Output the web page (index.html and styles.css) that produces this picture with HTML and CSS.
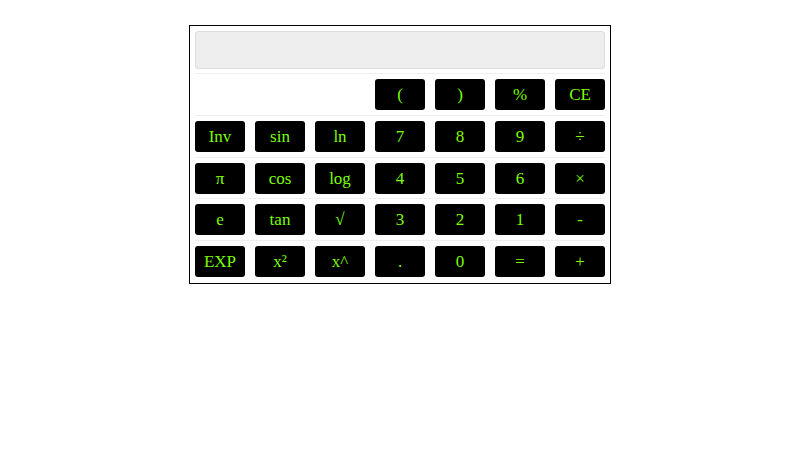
FILE: index.html
```html
<!DOCTYPE html>
<html>
<head>
<meta charset="utf-8">
<link rel="stylesheet" href="styles.css">
</head>
<body>
<div class="calc">
  <div class="display"></div>
  <div class="row">
    <span class="blank"></span><span class="blank"></span><span class="blank"></span>
    <button class="key">(</button><button class="key">)</button><button class="key">%</button><button class="key">CE</button>
  </div>
  <div class="row">
    <button class="key">Inv</button><button class="key">sin</button><button class="key">ln</button>
    <button class="key">7</button><button class="key">8</button><button class="key">9</button><button class="key">÷</button>
  </div>
  <div class="row">
    <button class="key">π</button><button class="key">cos</button><button class="key">log</button>
    <button class="key">4</button><button class="key">5</button><button class="key">6</button><button class="key">×</button>
  </div>
  <div class="row">
    <button class="key">e</button><button class="key">tan</button><button class="key">√</button>
    <button class="key">3</button><button class="key">2</button><button class="key">1</button><button class="key">-</button>
  </div>
  <div class="row">
    <button class="key">EXP</button><button class="key">x²</button><button class="key">x^</button>
    <button class="key">.</button><button class="key">0</button><button class="key">=</button><button class="key">+</button>
  </div>
</div>
</body>
</html>
```
FILE: styles.css
```css
html, body {
  margin: 0;
  padding: 0;
  background: #fff;
}
body {
  padding: 25px 0 0 189px;
  font-family: "Liberation Serif", serif;
}
.calc {
  border: 1px solid #000;
  padding: 5px 5px 1px 5px;
  box-sizing: border-box;
  width: 422px;
}
.display {
  height: 38px;
  box-sizing: border-box;
  background: #eeeeee;
  border: 1px solid #dcdcdc;
  border-radius: 3px;
  margin-bottom: 4px;
}
.row {
  display: flex;
  gap: 10px;
  border-top: 1px solid #efefef;
  padding: 5px 0 4.75px 0;
}
.blank, .key {
  width: 50px;
  height: 31px;
  flex: none;
}
.key {
  background: #000;
  color: #7cfc00;
  border: none;
  border-radius: 3px;
  font-family: "Liberation Serif", serif;
  font-size: 17px;
  padding: 0;
  margin: 0;
  line-height: 31px;
}
```
